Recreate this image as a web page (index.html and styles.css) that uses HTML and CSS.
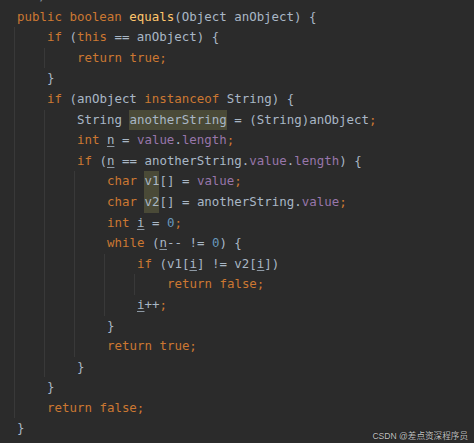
FILE: index.html
```html
<!DOCTYPE html>
<html>
<head>
<meta charset="utf-8">
<link rel="stylesheet" href="styles.css">
</head>
<body>
<div class="editor">
  <div class="code">
    <div class="ln"><span class="t"><span class="cm">  */</span></span></div>
    <div class="ln"><span class="t"><span class="kw">public boolean </span><span class="fn">equals</span>(Object anObject) {</span></div>
    <div class="ln"><i class="g"></i><span class="t"><span class="kw">if </span>(<span class="kw">this</span> == anObject) {</span></div>
    <div class="ln"><i class="g"></i><i class="g"></i><span class="t"><span class="kw">return true;</span></span></div>
    <div class="ln"><i class="g"></i><span class="t">}</span></div>
    <div class="ln"><i class="g"></i><span class="t"><span class="kw">if </span>(anObject <span class="kw">instanceof </span>String) {</span></div>
    <div class="ln"><i class="g"></i><i class="g"></i><span class="t">String <span class="hl">anotherString</span> = (String)anObject<span class="kw">;</span></span></div>
    <div class="ln"><i class="g"></i><i class="g"></i><span class="t"><span class="kw">int </span><u>n</u> = <span class="fd">value</span>.<span class="fd">length</span><span class="kw">;</span></span></div>
    <div class="ln"><i class="g"></i><i class="g"></i><span class="t"><span class="kw">if </span>(<u>n</u> == anotherString.<span class="fd">value</span>.<span class="fd">length</span>) {</span></div>
    <div class="ln"><i class="g"></i><i class="g"></i><i class="g"></i><span class="t"><span class="kw">char </span><span class="hl">v1</span>[] = <span class="fd">value</span><span class="kw">;</span></span></div>
    <div class="ln"><i class="g"></i><i class="g"></i><i class="g"></i><span class="t"><span class="kw">char </span><span class="hl">v2</span>[] = anotherString.<span class="fd">value</span><span class="kw">;</span></span></div>
    <div class="ln"><i class="g"></i><i class="g"></i><i class="g"></i><span class="t"><span class="kw">int </span><u>i</u> = <span class="nm">0</span><span class="kw">;</span></span></div>
    <div class="ln"><i class="g"></i><i class="g"></i><i class="g"></i><span class="t"><span class="kw">while </span>(<u>n</u>-- != <span class="nm">0</span>) {</span></div>
    <div class="ln"><i class="g"></i><i class="g"></i><i class="g"></i><i class="g"></i><span class="t"><span class="kw">if </span>(v1[<u>i</u>] != v2[<u>i</u>])</span></div>
    <div class="ln"><i class="g"></i><i class="g"></i><i class="g"></i><i class="g"></i><i class="g"></i><span class="t"><span class="kw">return false;</span></span></div>
    <div class="ln"><i class="g"></i><i class="g"></i><i class="g"></i><i class="g"></i><span class="t"><u>i</u>++<span class="kw">;</span></span></div>
    <div class="ln"><i class="g"></i><i class="g"></i><i class="g"></i><span class="t">}</span></div>
    <div class="ln"><i class="g"></i><i class="g"></i><i class="g"></i><span class="t"><span class="kw">return true;</span></span></div>
    <div class="ln"><i class="g"></i><i class="g"></i><span class="t">}</span></div>
    <div class="ln"><i class="g"></i><span class="t">}</span></div>
    <div class="ln"><i class="g"></i><span class="t"><span class="kw">return false;</span></span></div>
    <div class="ln"><span class="t">}</span></div>
  </div>
  <div class="wm">CSDN @差点资深程序员</div>
</div>
</body>
</html>
```
FILE: styles.css
```css
html, body {
  margin: 0;
  padding: 0;
  background: #2b2b2b;
}
.editor {
  position: relative;
  width: 474px;
  height: 443px;
  overflow: hidden;
  background: #2b2b2b;
}
.code {
  display: flex;
  flex-direction: column;
  margin-top: -14px;
  padding-left: 14px;
  font-family: "DejaVu Sans Mono", "Liberation Mono", monospace;
  font-size: 12.45px;
  color: #a9b7c6;
}
.ln {
  display: flex;
  align-items: stretch;
  height: 20.6px;
  line-height: 20.6px;
  white-space: pre;
}
.g {
  flex: 0 0 30px;
  background: linear-gradient(#393939, #393939) no-repeat 0 0 / 1px 100%;
}
.t {
  margin-left: 3px;
}
.kw { color: #cc7832; }
.fn { color: #ffc66d; }
.fd { color: #9876aa; }
.nm { color: #6897bb; }
.cm { color: #8a96a3; }
.hl {
  display: inline-block;
  background: #4a4a37;
}
u {
  text-decoration: underline;
  text-decoration-color: #8e99a4;
  text-decoration-thickness: 1px;
  text-underline-offset: 2px;
}
.wm {
  position: absolute;
  right: 6px;
  bottom: 2px;
  font-family: "Liberation Sans", "Noto Sans CJK SC", sans-serif;
  font-size: 8.6px;
  color: #c4c4c4;
  text-shadow: 0 0 1px #000;
}
```
